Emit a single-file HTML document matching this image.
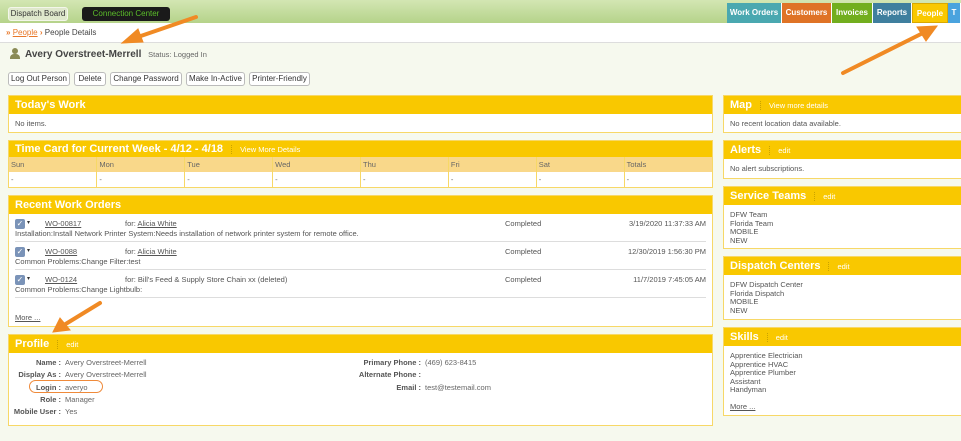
<!DOCTYPE html>
<html><head><meta charset="utf-8"><style>
*{box-sizing:border-box;margin:0;padding:0}
body{width:961px;height:441px;overflow:hidden;background:#f6f9ee;font-family:"Liberation Sans",Arial,sans-serif;font-size:8px;color:#444;position:relative}
.a{position:absolute}
.top{left:0;top:0;width:961px;height:23px;background:linear-gradient(#d3e6b3,#b5d38a)}
.btn1{left:8px;top:7px;width:60px;height:14px;background:#dfe8cc;border:1px solid #f3f6ea;border-radius:3px;font-size:8px;line-height:12px;text-align:center;color:#333}
.btn2{left:82px;top:7px;width:88px;height:14px;background:#1a1a1a;border-radius:3px;color:#5cbf2a;font-size:8px;line-height:14px;text-align:center}
.tab{top:3px;height:20px;color:#fff;font-size:8px;font-weight:bold;line-height:20px;text-align:center;border-right:1px solid #fff}
.crumb{left:0;top:23px;width:961px;height:20px;background:#fff;border-bottom:1px solid #ddd;padding:5px 6px;font-size:8px}
.crumb a{color:#e8782a;text-decoration:underline}
.b{top:72px;height:14px;border:1px solid #bbb;border-radius:3px;background:#fff;font-size:8px;line-height:12px;text-align:center;color:#333}
.p{background:#fff;border:1px solid #f7d867}
.h{background:#f9c800;color:#fff;font-weight:bold;font-size:11px;height:18px;line-height:18px;padding-left:6px;white-space:nowrap}
.h span{font-size:7.5px;font-weight:normal;margin-left:8px;padding-left:8px;border-left:1px dotted #c9a300}
.bd{padding:6px;font-size:7.5px;line-height:8.5px;color:#555}
table{border-collapse:collapse;width:100%}
td{font-size:7.5px;color:#666;padding:3px 2px;border-left:1px solid #f7d867;width:12.5%}
u{color:#555}
.wo{height:28px;border-bottom:1px solid #ddd;margin:0 6px;position:relative;font-size:7.5px;color:#555}
.wo .ck{position:absolute;left:0;top:5px;width:10px;height:10px;background:#7a93b8;border-radius:2px;color:#fff;font-size:8px;line-height:10px;text-align:center}
.wo .dd{position:absolute;left:12px;top:5px;font-size:6px;color:#333}
.lbl{text-align:right;font-weight:bold;color:#555}
</style></head><body>
<div class="a top"></div>
<div class="a btn1">Dispatch Board</div>
<div class="a btn2">Connection Center</div>
<div class="a tab" style="left:727px;width:55px;background:#4aa8b0">Work Orders</div>
<div class="a tab" style="left:782px;width:50px;background:#df7326">Customers</div>
<div class="a tab" style="left:832px;width:41px;background:#72ae1e">Invoices</div>
<div class="a tab" style="left:873px;width:39px;background:#3f7f9e">Reports</div>
<div class="a tab" style="left:912px;width:36px;background:#f9c800;border:1px solid #d9a800">People</div>
<div class="a tab" style="left:948px;width:13px;background:#4aa3de">T</div>
<div class="a crumb"><b style="color:#e8782a">»</b> <a>People</a> <b style="color:#e8782a">›</b> People Details</div>
<div class="a" style="left:10px;top:48px;width:10px;height:11px"><div style="width:6px;height:6px;border-radius:50%;background:#8a8a55;margin-left:2px"></div><div style="width:10px;height:5px;background:#8a8a55;border-radius:4px 4px 0 0"></div></div>
<div class="a" style="left:25px;top:49px;font-size:10px;font-weight:bold;color:#444">Avery Overstreet-Merrell <span style="font-size:7.5px;font-weight:normal;color:#666;margin-left:4px">Status: Logged In</span></div>
<div class="a b" style="left:8px;width:62px">Log Out Person</div>
<div class="a b" style="left:74px;width:32px">Delete</div>
<div class="a b" style="left:110px;width:72px">Change Password</div>
<div class="a b" style="left:186px;width:59px">Make In-Active</div>
<div class="a b" style="left:249px;width:61px">Printer-Friendly</div>

<div class="a p" style="left:8px;top:95px;width:705px;height:38px"><div class="h">Today's Work</div><div class="bd">No items.</div></div>
<div class="a p" style="left:8px;top:140px;width:705px;height:48px"><div class="h" style="height:16px;line-height:16px">Time Card for Current Week - 4/12 - 4/18<span>View More Details</span></div>
<table><tr style="background:#f9d88a"><td style="border-left:0">Sun</td><td>Mon</td><td>Tue</td><td>Wed</td><td>Thu</td><td>Fri</td><td>Sat</td><td>Totals</td></tr>
<tr><td style="border-left:0">-</td><td>-</td><td>-</td><td>-</td><td>-</td><td>-</td><td>-</td><td>-</td></tr></table></div>

<div class="a p" style="left:8px;top:195px;width:705px;height:132px"><div class="h">Recent Work Orders</div>
<div class="wo"><div class="ck">✓</div><div class="dd">▾</div><div class="a" style="left:30px;top:5px"><u>WO-00817</u></div><div class="a" style="left:110px;top:5px">for: <u>Alicia White</u></div><div class="a" style="left:490px;top:5px">Completed</div><div class="a" style="right:0;top:5px">3/19/2020 11:37:33 AM</div><div class="a" style="left:0;top:15px;white-space:nowrap">Installation:Install Network Printer System:Needs installation of network printer system for remote office.</div></div>
<div class="wo"><div class="ck">✓</div><div class="dd">▾</div><div class="a" style="left:30px;top:5px"><u>WO-0088</u></div><div class="a" style="left:110px;top:5px">for: <u>Alicia White</u></div><div class="a" style="left:490px;top:5px">Completed</div><div class="a" style="right:0;top:5px">12/30/2019 1:56:30 PM</div><div class="a" style="left:0;top:15px">Common Problems:Change Filter:test</div></div>
<div class="wo"><div class="ck">✓</div><div class="dd">▾</div><div class="a" style="left:30px;top:5px"><u>WO-0124</u></div><div class="a" style="left:110px;top:5px;white-space:nowrap">for: Bill's Feed &amp; Supply Store Chain xx (deleted)</div><div class="a" style="left:490px;top:5px">Completed</div><div class="a" style="right:0;top:5px">11/7/2019 7:45:05 AM</div><div class="a" style="left:0;top:15px">Common Problems:Change Lightbulb:</div></div>
<div class="a" style="left:6px;top:117px;font-size:7.5px"><u>More ...</u></div></div>

<div class="a p" style="left:8px;top:334px;width:705px;height:92px"><div class="h">Profile<span>edit</span></div>
<div class="a" style="left:0;top:22px;width:700px;font-size:7.5px;line-height:12.3px;color:#666">
<div class="a lbl" style="left:0;width:52px">Name :<br>Display As :<br>Login :<br>Role :<br>Mobile User :</div>
<div class="a" style="left:56px;width:200px">Avery Overstreet-Merrell<br>Avery Overstreet-Merrell<br>averyo<br>Manager<br>Yes</div>
<div class="a lbl" style="left:300px;width:112px">Primary Phone :<br>Alternate Phone :<br>Email :</div>
<div class="a" style="left:416px;width:200px">(469) 623-8415<br><br>test@testemail.com</div>
</div></div>
<div class="a" style="left:29px;top:380px;width:74px;height:13px;border:1.5px solid #ef8a3a;border-radius:8px"></div>

<div class="a p" style="left:723px;top:95px;width:240px;height:38px"><div class="h">Map<span>View more details</span></div><div class="bd">No recent location data available.</div></div>
<div class="a p" style="left:723px;top:140px;width:240px;height:39px"><div class="h">Alerts<span>edit</span></div><div class="bd">No alert subscriptions.</div></div>
<div class="a p" style="left:723px;top:186px;width:240px;height:63px"><div class="h">Service Teams<span>edit</span></div><div class="bd">DFW Team<br>Florida Team<br>MOBILE<br>NEW</div></div>
<div class="a p" style="left:723px;top:256px;width:240px;height:64px"><div class="h">Dispatch Centers<span>edit</span></div><div class="bd">DFW Dispatch Center<br>Florida Dispatch<br>MOBILE<br>NEW</div></div>
<div class="a p" style="left:723px;top:327px;width:240px;height:89px"><div class="h">Skills<span>edit</span></div><div class="bd">Apprentice Electrician<br>Apprentice HVAC<br>Apprentice Plumber<br>Assistant<br>Handyman<br><br><u>More ...</u></div></div>

<svg class="a" style="left:0;top:0" width="961" height="441">
<g stroke="#f08a24" stroke-width="4" stroke-linecap="round" fill="#f08a24">
<line x1="196" y1="17" x2="135" y2="38"/><polygon points="122,43 138,29 143,42" stroke-width="1"/>
<line x1="843" y1="73" x2="925" y2="32"/><polygon points="937,26 917,27 926,41" stroke-width="1"/>
<line x1="100" y1="303" x2="64" y2="325"/><polygon points="53,332 60,318 70,330" stroke-width="1"/>
</g></svg>
</body></html>
